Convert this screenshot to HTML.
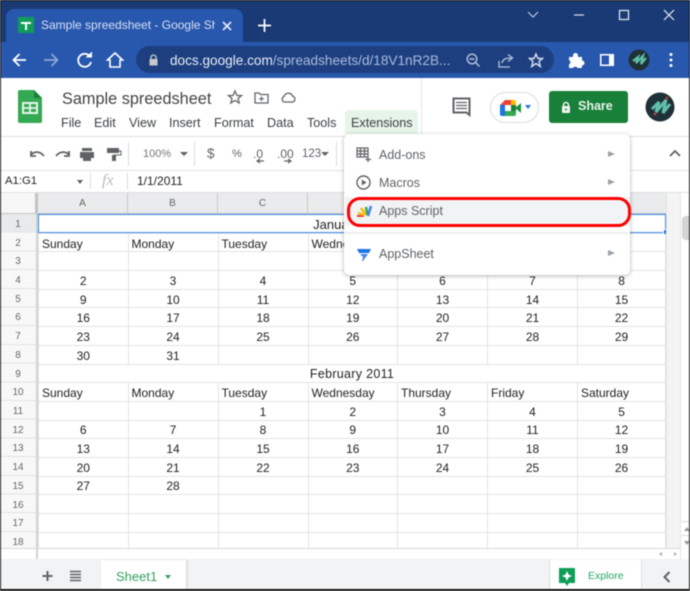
<!DOCTYPE html>
<html><head><meta charset="utf-8"><style>
*{box-sizing:border-box}
html,body{margin:0;padding:0;width:690px;height:591px;overflow:hidden;background:#fff;font-family:"Liberation Sans",sans-serif}
#w{position:absolute;left:0;top:0;width:690px;height:591px;overflow:hidden;filter:blur(.4px)}
.a{position:absolute;white-space:nowrap}
svg{position:absolute;overflow:visible}
.m{top:115px;font-size:12.6px;color:#3c4043;line-height:16px}
.d{font-size:12.5px;color:#5f6368;line-height:16px;left:379px}
.arr{left:608px;width:0;height:0;border-left:7px solid #9aa0a6;border-top:3.5px solid transparent;border-bottom:3.5px solid transparent}
.tb{color:#5f6368;font-size:12px;line-height:14px;top:147px}
.h{color:#666;font-size:10px;text-align:center;line-height:12px;left:0;width:36px}
.c{color:#666;font-size:10px;text-align:center;line-height:12px;top:198px;width:89px}
table{position:absolute;left:0;top:0;border-collapse:collapse;table-layout:fixed;width:627px;font-size:12px;color:#222}
td{border:1px solid #e2e3e3;height:18.7px;padding:2px 0 0;text-align:center;line-height:14px;overflow:hidden;white-space:nowrap}
td.l{text-align:left;padding-left:3px}
</style></head><body><div id="w">
<div class="a" style="left:0;top:0;width:690px;height:42px;background:#1a3a75"></div>
<div class="a" style="left:6px;top:9px;width:237px;height:33px;background:#2857ae;border-radius:8px 8px 0 0"></div>
<div class="a" style="left:0;top:42px;width:690px;height:36px;background:#2857ae"></div>
<div class="a" style="left:18px;top:17px;width:16px;height:16px;background:#0f9d58"></div>
<svg style="left:18px;top:17px" width="16" height="16"><path d="M3 6H13M8 6V13" stroke="#fff" stroke-width="2" fill="none"/></svg>
<div class="a" style="left:41px;top:18px;width:174px;overflow:hidden;font-size:12px;line-height:15px;color:#d6e0f3">Sample spreedsheet - Google Sh</div>
<svg style="left:222px;top:21px" width="10" height="10"><path d="M1 1L9 9M9 1L1 9" stroke="#e6ecf8" stroke-width="1.6"/></svg>
<svg style="left:258px;top:19px" width="13" height="13"><path d="M6.5 0V13M0 6.5H13" stroke="#fff" stroke-width="1.7"/></svg>
<svg style="left:528px;top:12px" width="12" height="8"><path d="M0 0L5 5L10 0" stroke="#b9c6e0" stroke-width="1.2" fill="none"/></svg>
<svg style="left:574px;top:10px" width="110" height="20"><path d="M0 5H10" stroke="#d8e0f0" stroke-width="1.2"/><rect x="45.5" y="0.5" width="9" height="9" stroke="#e8edf6" stroke-width="1.2" fill="none"/><path d="M90 0L100 10M100 0L90 10" stroke="#e8edf6" stroke-width="1.2"/></svg>
<svg style="left:12px;top:50px" width="115" height="22"><path d="M14 10H2M7.500 4L1.500 10L7.500 16" stroke="#fff" stroke-width="1.8" fill="none"/><path d="M32 10H45M39.500 4L45.500 10L39.500 16" stroke="#8ea6d5" stroke-width="1.8" fill="none"/><path d="M78 6.500A6.500 6.500 0 1 0 79 12" stroke="#fff" stroke-width="1.8" fill="none"/><path d="M73.500 7.500H80V1.500Z" fill="#fff"/><path d="M95.500 10L103 3L110.500 10H108V17H98V10Z" stroke="#fff" stroke-width="1.6" fill="none"/></svg>
<div class="a" style="left:136px;top:46px;width:418px;height:27px;background:#1d3f80;border-radius:14px"></div>
<svg style="left:148px;top:54px" width="11" height="12"><path d="M3 5V3.500A2.500 2.500 0 0 1 8 3.500V5" stroke="#c8c8c8" stroke-width="1.300" fill="none"/><rect x="1.500" y="5" width="8" height="6.500" fill="#c8c8c8"/></svg>
<div class="a" style="left:170px;top:52px;font-size:13.6px;line-height:17px;color:#e8edf6">docs.google.com<span style="color:#a9bbdc">/spreadsheets/d/18V1nR2B...</span></div>
<svg style="left:466px;top:53px" width="80" height="16"><circle cx="6" cy="6" r="4.800" stroke="#b5c3de" stroke-width="1.400" fill="none"/><path d="M9.500 9.500L13.500 13.500M3.500 6H8.500" stroke="#b5c3de" stroke-width="1.400"/><path d="M33 8V14H44M36 10C37 6 40 5 45 5M42 1.500L46.500 5L42 8.500" stroke="#b5c3de" stroke-width="1.300" fill="none"/><path d="M70 1L72 5.500H76.500L73 8.500L74.300 13.500L70 10.500L65.700 13.500L67 8.500L63.500 5.500H68Z" stroke="#d9e1f0" stroke-width="1.400" fill="none"/></svg>
<svg style="left:568px;top:52px" width="110" height="18"><path d="M1 5H5V3.500A2.500 2.500 0 0 1 10 3.500V5H14V8.500A2.500 2.500 0 0 1 14 13.500V16H9.500A2.500 2.500 0 0 0 5 16H1V12.500A2.500 2.500 0 0 0 1 8Z" fill="#fff"/><rect x="32" y="2" width="14" height="12" fill="#fff"/><rect x="33.500" y="3.500" width="7.500" height="9" fill="#2857ae"/><circle cx="103" cy="2.500" r="1.500" fill="#fff"/><circle cx="103" cy="8" r="1.500" fill="#fff"/><circle cx="103" cy="13.500" r="1.500" fill="#fff"/></svg>
<svg style="left:628px;top:49px" width="22" height="22"><circle cx="11" cy="11" r="10.500" fill="#1f3138"/><path d="M5 12L10 8L8 14L15 7L13 15L18 9" stroke="#5fbfa8" stroke-width="2.200" fill="none"/></svg>

<div class="a" style="left:421px;top:78px;width:1px;height:58px;background:#e4e4e4"></div>
<svg style="left:18px;top:90px" width="24" height="33"><path d="M2 0H16L24 8V31A2 2 0 0 1 22 33H2A2 2 0 0 1 0 31V2A2 2 0 0 1 2 0Z" fill="#34a853"/><path d="M16 0L24 8H16Z" fill="#188038"/><rect x="5" y="13" width="14" height="10" fill="none" stroke="#e6f4ea" stroke-width="2"/><path d="M12 13V23M5 18H19" stroke="#e6f4ea" stroke-width="1.800"/></svg>
<div class="a" style="left:62px;top:89px;font-size:16.3px;line-height:20px;color:#444">Sample spreedsheet</div>
<svg style="left:228px;top:90px" width="72" height="15"><path d="M7 1L9 5.500H13.500L10 8.500L11.200 13L7 10.500L2.800 13L4 8.500L.5 5.500H5Z" stroke="#5f6368" stroke-width="1.300" fill="none"/><path d="M27 3H31L32.500 4.500H40V13H27Z" stroke="#5f6368" stroke-width="1.300" fill="none"/><path d="M33.500 6.500V11M31 8.800H36" stroke="#5f6368" stroke-width="1.200"/><path d="M56 12A3 3 0 0 1 56 6.500A4.500 4.500 0 0 1 64.500 6A3.200 3.200 0 0 1 65 12Z" stroke="#5f6368" stroke-width="1.300" fill="none"/></svg>
<div class="a m" style="left:61px">File</div><div class="a m" style="left:94px">Edit</div><div class="a m" style="left:129px">View</div><div class="a m" style="left:169px">Insert</div><div class="a m" style="left:214px">Format</div><div class="a m" style="left:267px">Data</div><div class="a m" style="left:307px">Tools</div>
<div class="a" style="left:345px;top:110px;width:73px;height:24px;background:#e6f4ea;border-radius:4px 4px 0 0"></div>
<div class="a m" style="left:351px">Extensions</div>
<svg style="left:452px;top:97px" width="20" height="20"><path d="M1.500 1.500H17.500V15.500H17.500V18L14.500 15.500H1.500Z" stroke="#5f6368" stroke-width="2" fill="#fff"/><path d="M4 5.500H15M4 8.500H15M4 11.500H15" stroke="#5f6368" stroke-width="1.200"/></svg>
<div class="a" style="left:490px;top:92px;width:49px;height:31px;border:1px solid #dadce0;border-radius:16px;background:#fff"></div>
<svg style="left:500px;top:100px" width="32" height="16"><path d="M0 5L5 0H11V5H5V11H0Z" fill="#ea4335"/><path d="M11 0H14A2 2 0 0 1 16 2V5H11Z" fill="#fbbc04"/><path d="M0 5H5V11H0Z" fill="#1a73e8"/><path d="M0 11H5V16H2A2 2 0 0 1 0 14Z" fill="#1a73e8"/><path d="M5 11H11V16H5Z" fill="#34a853"/><path d="M11 11H16V14A2 2 0 0 1 14 16H11Z" fill="#34a853"/><path d="M16 5V11H11V5H16Z" fill="#188038"/><path d="M15 8L21 3V13Z" fill="#1e8e3e"/><path d="M5 5H11V11H5Z" fill="#fff"/><path d="M25 5H31L28 9Z" fill="#1a73e8"/></svg>
<div class="a" style="left:549px;top:91px;width:79px;height:32px;background:#188038;border-radius:3px"></div>
<svg style="left:560px;top:101px" width="12" height="13"><path d="M3.500 5V4A2.500 2.500 0 0 1 8.500 4V5" stroke="#f3f3f3" stroke-width="1.500" fill="none"/><rect x="2" y="5" width="8" height="7" rx="1" fill="#f3f3f3"/><circle cx="6" cy="8.500" r="1" fill="#188038"/></svg>
<div class="a" style="left:578px;top:98px;font-size:12.5px;line-height:16px;font-weight:bold;color:#e8f3ec">Share</div>
<svg style="left:645px;top:92px" width="30" height="30"><circle cx="15" cy="15" r="14.500" fill="#1f3138"/><path d="M7 17L14 10L11 20L21 8L18 21L25 12" stroke="#5fbfa8" stroke-width="3" fill="none"/><circle cx="10" cy="22" r="1.300" fill="#c8473a"/><circle cx="22" cy="6" r="1.300" fill="#c8473a"/></svg>

<div class="a" style="left:0;top:136px;width:690px;height:1px;background:#e0e0e0"></div>
<svg style="left:29px;top:147px" width="95" height="16"><path d="M2 8C5 4 11 4 15 9M2 4V9H7" stroke="#5f6368" stroke-width="1.800" fill="none"/><path d="M40 8C37 4 31 4 27 9M40 4V9H35" stroke="#5f6368" stroke-width="1.800" fill="none"/><path d="M53 1H63V4H53ZM51 5H65V11H62V14H54V11H51Z" fill="#5f6368"/><path d="M78 1H90V6H78ZM83 8H87V14H83Z" fill="#5f6368"/><path d="M89 4H92V8H85V9" stroke="#5f6368" stroke-width="1" fill="none"/></svg>
<div class="a" style="left:128px;top:142px;width:1px;height:24px;background:#dadce0"></div>
<div class="a tb" style="left:143px;font-size:11px;color:#777">100%</div>
<div class="a" style="left:180px;top:152px;border-top:4px solid #5f6368;border-left:4px solid transparent;border-right:4px solid transparent"></div>
<div class="a" style="left:194px;top:142px;width:1px;height:24px;background:#dadce0"></div>
<div class="a tb" style="left:207px;font-size:13.500px">$</div><div class="a tb" style="left:232px;font-size:11px">%</div>
<div class="a tb" style="left:253px;font-size:12px">.0</div><div class="a tb" style="left:277px;font-size:12px">.00</div><div class="a tb" style="left:302px;font-size:11.500px">123</div>
<svg style="left:255px;top:158px" width="45" height="7"><path d="M9 3H3M5 1L2 3L5 5M29 3H35M33 1L36 3L33 5" stroke="#5f6368" stroke-width="1.200" fill="none"/></svg>
<div class="a" style="left:321px;top:152px;border-top:4px solid #5f6368;border-left:4px solid transparent;border-right:4px solid transparent"></div>
<div class="a" style="left:336px;top:142px;width:1px;height:24px;background:#dadce0"></div>
<svg style="left:669px;top:149px" width="12" height="8"><path d="M1 7L6 2L11 7" stroke="#5f6368" stroke-width="1.800" fill="none"/></svg>
<div class="a" style="left:0;top:170px;width:690px;height:1px;background:#e0e0e0"></div>
<div class="a" style="left:5px;top:174px;font-size:11.300px;line-height:14px;color:#222">A1:G1</div>
<div class="a" style="left:77px;top:180px;border-top:4px solid #5f6368;border-left:3.500px solid transparent;border-right:3.500px solid transparent"></div>
<div class="a" style="left:90px;top:173px;width:1px;height:16px;background:#dadce0"></div>
<div class="a" style="left:127px;top:173px;width:1px;height:16px;background:#dadce0"></div>
<div class="a" style="left:102px;top:171px;font:italic 16px/20px 'Liberation Serif',serif;color:#bbb">fx</div>
<div class="a" style="left:137px;top:174px;font-size:12px;line-height:14px;color:#222">1/1/2011</div>
<div class="a" style="left:0;top:192px;width:690px;height:1px;background:#e0e0e0"></div>

<div class="a" style="left:0;top:193px;width:680px;height:21px;background:#eaebec;border-bottom:1px solid #c4c4c4"></div>
<div class="a" style="left:0;top:214px;width:38px;height:334px;background:repeating-linear-gradient(#f8f8f8 0 17.7px,#e2e2e2 17.7px 18.7px)"></div>
<div class="a" style="left:0;top:193px;width:35px;height:20px;background:#f7f7f7"></div>
<div class="a" style="left:35px;top:193px;width:3px;height:21px;background:#c4c4c4"></div>
<div class="a" style="left:36px;top:214px;width:2px;height:345px;background:#d2d2d2"></div>
<div class="a" style="left:0;top:214px;width:36px;height:18px;background:#e8eaed"></div>
<div class="a" style="left:127px;top:193px;width:1px;height:20px;background:#c9c9c9"></div>
<div class="a" style="left:217px;top:193px;width:1px;height:20px;background:#c9c9c9"></div>
<div class="a" style="left:307px;top:193px;width:1px;height:20px;background:#c9c9c9"></div>
<div class="a c" style="left:38px">A</div><div class="a c" style="left:128px">B</div><div class="a c" style="left:218px">C</div>

<div class="a h" style="top:219px">1</div><div class="a h" style="top:238px">2</div><div class="a h" style="top:256px">3</div><div class="a h" style="top:275px">4</div><div class="a h" style="top:294px">5</div><div class="a h" style="top:312px">6</div><div class="a h" style="top:331px">7</div><div class="a h" style="top:350px">8</div><div class="a h" style="top:369px">9</div><div class="a h" style="top:387px">10</div><div class="a h" style="top:406px">11</div><div class="a h" style="top:425px">12</div><div class="a h" style="top:443px">13</div><div class="a h" style="top:462px">14</div><div class="a h" style="top:481px">15</div><div class="a h" style="top:500px">16</div><div class="a h" style="top:518px">17</div><div class="a h" style="top:537px">18</div>

<div class="a" style="left:38px;top:214px;width:628px;height:334px;overflow:hidden">
<table>
<colgroup><col style="width:89.500px"><col style="width:90px"><col style="width:90px"><col style="width:89.500px"><col style="width:90px"><col style="width:90px"><col style="width:88px"></colgroup>
<tr><td colspan="7" style="font-size:13px">January 2011</td></tr>
<tr><td class="l">Sunday</td><td class="l">Monday</td><td class="l">Tuesday</td><td class="l">Wednesday</td><td class="l">Thursday</td><td class="l">Friday</td><td class="l">Saturday</td></tr>
<tr><td></td><td></td><td></td><td></td><td></td><td></td><td>1</td></tr>
<tr><td>2</td><td>3</td><td>4</td><td>5</td><td>6</td><td>7</td><td>8</td></tr>
<tr><td>9</td><td>10</td><td>11</td><td>12</td><td>13</td><td>14</td><td>15</td></tr>
<tr><td>16</td><td>17</td><td>18</td><td>19</td><td>20</td><td>21</td><td>22</td></tr>
<tr><td>23</td><td>24</td><td>25</td><td>26</td><td>27</td><td>28</td><td>29</td></tr>
<tr><td>30</td><td>31</td><td></td><td></td><td></td><td></td><td></td></tr>
<tr><td colspan="7" style="font-size:12.500px;letter-spacing:.3px">February 2011</td></tr>
<tr><td class="l">Sunday</td><td class="l">Monday</td><td class="l">Tuesday</td><td class="l">Wednesday</td><td class="l">Thursday</td><td class="l">Friday</td><td class="l">Saturday</td></tr>
<tr><td></td><td></td><td>1</td><td>2</td><td>3</td><td>4</td><td>5</td></tr>
<tr><td>6</td><td>7</td><td>8</td><td>9</td><td>10</td><td>11</td><td>12</td></tr>
<tr><td>13</td><td>14</td><td>15</td><td>16</td><td>17</td><td>18</td><td>19</td></tr>
<tr><td>20</td><td>21</td><td>22</td><td>23</td><td>24</td><td>25</td><td>26</td></tr>
<tr><td>27</td><td>28</td><td></td><td></td><td></td><td></td><td></td></tr>
<tr><td></td><td></td><td></td><td></td><td></td><td></td><td></td></tr>
<tr><td></td><td></td><td></td><td></td><td></td><td></td><td></td></tr>
<tr><td></td><td></td><td></td><td></td><td></td><td></td><td></td></tr>
</table>
</div>
<div class="a" style="left:38px;top:214px;width:628px;height:19px;border:1px solid #3d8be8"></div>
<div class="a" style="left:663px;top:229px;width:6px;height:6px;background:#1a73e8;border:1px solid #fff"></div>
<div class="a" style="left:666px;top:193px;width:14px;height:355px;background:#f4f4f4;border-left:1px solid #e4e4e4"></div>
<div class="a" style="left:680px;top:193px;width:10px;height:366px;background:#fff;border-left:1px solid #e4e4e4"></div>
<div class="a" style="left:682px;top:216px;width:8px;height:24px;background:#d4d4d4;border-radius:4px 0 0 4px"></div>
<div class="a" style="left:681px;top:521px;width:9px;height:1px;background:#ddd"></div><div class="a" style="left:681px;top:535px;width:9px;height:1px;background:#ddd"></div>
<div class="a" style="left:684px;top:527px;border-bottom:4px solid #999;border-left:3px solid transparent;border-right:3px solid transparent"></div>
<div class="a" style="left:684px;top:541px;border-top:4px solid #999;border-left:3px solid transparent;border-right:3px solid transparent"></div>
<div class="a" style="left:0;top:548px;width:680px;height:1px;background:#d8d8d8"></div>
<div class="a" style="left:659px;top:552px;border-right:3px solid #aaa;border-top:2.500px solid transparent;border-bottom:2.500px solid transparent"></div>
<div class="a" style="left:674px;top:552px;border-left:3px solid #aaa;border-top:2.500px solid transparent;border-bottom:2.500px solid transparent"></div>

<div class="a" style="left:344px;top:134px;width:286px;height:141px;background:#fff;border-radius:5px;box-shadow:0 1px 4px rgba(0,0,0,.3)"></div>
<svg style="left:356px;top:147px" width="17" height="15"><path d="M1 1H12V10H1ZM1 4H12M1 7H12M4.500 1V10M8.500 1V10" stroke="#5f6368" stroke-width="1.200" fill="none"/><path d="M12 10V15M9.500 12.500H15" stroke="#5f6368" stroke-width="1.300"/></svg>
<div class="a d" style="top:147px">Add-ons</div><div class="a arr" style="top:151px"></div>
<svg style="left:356px;top:175px" width="15" height="15"><circle cx="7.500" cy="7.500" r="6.500" stroke="#5f6368" stroke-width="1.400" fill="none"/><path d="M5.800 4.500L10.500 7.500L5.800 10.500Z" fill="#5f6368"/></svg>
<div class="a d" style="top:175px">Macros</div><div class="a arr" style="top:179px"></div>
<div class="a" style="left:345px;top:197px;width:285px;height:29px;background:#f1f3f4"></div>
<svg style="left:357px;top:205px" width="15" height="12"><path d="M0 11H7" stroke="#ea4335" stroke-width="2"/><path d="M1 8L7 10" stroke="#fbbc04" stroke-width="2.500"/><path d="M4 3L9 10" stroke="#fbbc04" stroke-width="2.500"/><path d="M9 2L10.500 10" stroke="#34a853" stroke-width="2.500"/><path d="M14 1L11 11" stroke="#4285f4" stroke-width="2.500"/></svg>
<div class="a d" style="top:203px">Apps Script</div>
<div class="a" style="left:347px;top:197px;width:284px;height:30px;border:3px solid #f00;border-radius:13px"></div>
<div class="a" style="left:345px;top:232px;width:284px;height:2px;background:#eee"></div>
<svg style="left:357px;top:249px" width="15" height="12"><path d="M0 0H14L12 4H2Z" fill="#1a73e8"/><path d="M3 5H11L6 12H5L6 8Z" fill="#4285f4"/></svg>
<div class="a d" style="top:246px">AppSheet</div><div class="a arr" style="top:250px"></div>

<div class="a" style="left:0;top:559px;width:690px;height:30px;background:#f1f3f4"></div>
<svg style="left:42px;top:570px" width="40" height="12"><path d="M5.500 1V11M.5 6H10.500" stroke="#5f6368" stroke-width="2"/><path d="M28 1.500H39M28 4.500H39M28 7.500H39M28 10.500H39" stroke="#5f6368" stroke-width="1.600"/></svg>
<div class="a" style="left:101px;top:560px;width:85px;height:29px;background:#fff;box-shadow:1px 0 2px rgba(0,0,0,.15)"></div>
<div class="a" style="left:116px;top:569px;font-size:13px;line-height:16px;color:#34a060">Sheet1</div>
<div class="a" style="left:165px;top:575px;border-top:4px solid #34a060;border-left:3.500px solid transparent;border-right:3.500px solid transparent"></div>
<div class="a" style="left:549px;top:560px;width:93px;height:29px;background:#fff;border-left:1px solid #ddd;border-right:1px solid #ddd"></div>
<svg style="left:559px;top:568px" width="17" height="19"><path d="M0 0H16V15H10L8 18L6 15H0Z" fill="#0f9d58"/><path d="M8 3L9.500 6.500L13 8L9.500 9.500L8 13L6.500 9.500L3 8L6.500 6.500Z" fill="#fff"/></svg>
<div class="a" style="left:588px;top:569px;font-size:10.500px;line-height:15px;color:#23a566">Explore</div>
<svg style="left:663px;top:571px" width="8" height="12"><path d="M6.500 1L1.500 6L6.500 11" stroke="#5f6368" stroke-width="2" fill="none"/></svg>

<div class="a" style="left:0;top:0;width:690px;height:1px;background:#0a0a0a"></div>
<div class="a" style="left:0;top:0;width:1px;height:591px;background:#111"></div>
<div class="a" style="left:0;top:589px;width:690px;height:2px;background:#111"></div>
<div class="a" style="left:689px;top:0;width:1px;height:591px;background:#111"></div>
</div></body></html>
